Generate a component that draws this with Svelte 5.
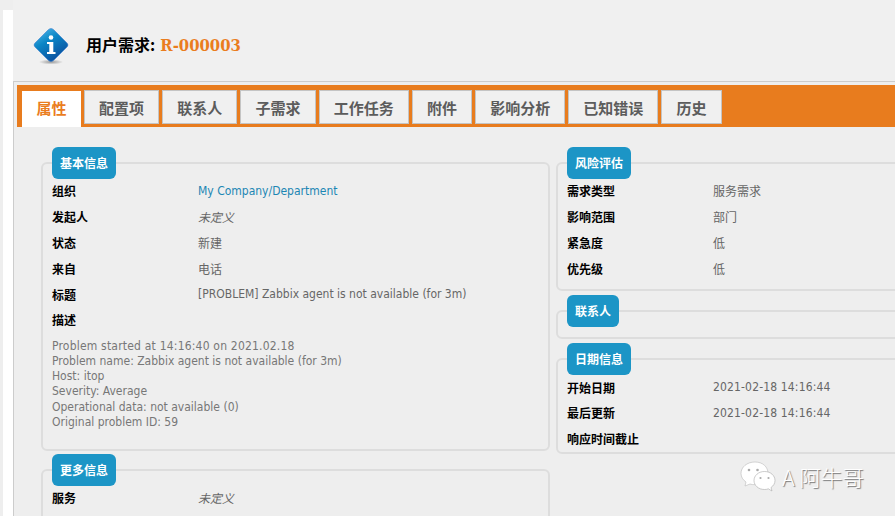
<script>
  const tabs = ['配置项', '联系人', '子需求', '工作任务', '附件', '影响分析', '已知错误', '历史'];

  const basic = [
    { label: '组织', value: 'My Company/Department', kind: 'link' },
    { label: '发起人', value: '未定义', kind: 'undefined' },
    { label: '状态', value: '新建' },
    { label: '来自', value: '电话' },
    { label: '标题', value: '[PROBLEM] Zabbix agent is not available (for 3m)' },
    { label: '描述', value: '' }
  ];

  const description = [
    'Problem started at 14:16:40 on 2021.02.18',
    'Problem name: Zabbix agent is not available (for 3m)',
    'Host: itop',
    'Severity: Average',
    'Operational data: not available (0)',
    'Original problem ID: 59'
  ];

  const risk = [
    { label: '需求类型', value: '服务需求' },
    { label: '影响范围', value: '部门' },
    { label: '紧急度', value: '低' },
    { label: '优先级', value: '低' }
  ];

  const dates = [
    { label: '开始日期', value: '2021-02-18 14:16:44', kind: 'date' },
    { label: '最后更新', value: '2021-02-18 14:16:44', kind: 'date' },
    { label: '响应时间截止', value: '' }
  ];
</script>

{#snippet rows(items)}
  {#each items as row}
    <div class="row">
      <span class="label">{row.label}</span>
      <span class="value {row.kind ?? ''}">{row.value}</span>
    </div>
  {/each}
{/snippet}

<div class="page">
  <div class="strip"></div>
  <div class="main">
    <header class="title">
      <svg class="logo" width="36" height="38" viewBox="0 0 36 38">
        <defs>
          <linearGradient id="dia" x1="0" y1="0" x2="0.6" y2="1">
            <stop offset="0" stop-color="#5cc0ee" />
            <stop offset="0.45" stop-color="#0b86c6" />
            <stop offset="1" stop-color="#0a4f9e" />
          </linearGradient>
          <radialGradient id="shade">
            <stop offset="0" stop-color="#999" />
            <stop offset="1" stop-color="#eee" />
          </radialGradient>
        </defs>
        <ellipse cx="18" cy="35" rx="12" ry="2.5" fill="url(#shade)" />
        <path d="M18 1.5 Q19.5 1.500 21 3 L34 16 Q36 18 34 20 L21 33 Q18 36 15 33 L2 20 Q0 18 2 16 L15 3 Q16.500 1.500 18 1.500 Z" fill="url(#dia)" stroke="#3c7fd0" stroke-width="0.6" />
        <circle cx="18" cy="10.500" r="2.300" fill="#fff" />
        <path d="M14 15 H20.300 V25 H22.500 V27 H14 V25 H16.300 V17 H14 Z" fill="#fff" />
      </svg>
      <h1>用户需求: <span>R-000003</span></h1>
    </header>

    <section class="panel">
      <nav class="tabs">
        <div class="tab active">属性</div>
        {#each tabs as tab}
          <div class="tab">{tab}</div>
        {/each}
      </nav>

      <div class="columns">
        <div class="col left">
          <fieldset>
            <legend>基本信息</legend>
            {@render rows(basic)}
            <div class="description">
              {#each description as line}
                <div>{line}</div>
              {/each}
            </div>
          </fieldset>
          <fieldset class="more">
            <legend>更多信息</legend>
            {@render rows([{ label: '服务', value: '未定义', kind: 'undefined' }])}
          </fieldset>
        </div>
        <div class="col right">
          <fieldset class="risk">
            <legend>风险评估</legend>
            {@render rows(risk)}
          </fieldset>
          <fieldset class="empty">
            <legend>联系人</legend>
          </fieldset>
          <fieldset>
            <legend>日期信息</legend>
            {@render rows(dates)}
          </fieldset>
        </div>
      </div>
    </section>
  </div>

  <div class="watermark">
    <svg width="36" height="32" viewBox="0 0 36 32">
      <path d="M15 1 C7 1 1 6 1 12.500 C1 16 3 19 6 21 L5 25 L10 23 C11.500 23.500 13 23.700 15 23.700 C23 23.700 28 18.500 28 12.500 C28 6 23 1 15 1 Z" fill="#fff" stroke="#bbb" stroke-width="0.6" />
      <path d="M24.500 10.500 C18.500 10.500 14 14.500 14 19.500 C14 24.500 18.500 28.500 24.500 28.500 C26 28.500 27 28.300 28.300 27.800 L32 30 L31 26.500 C33.500 24.800 35 22.300 35 19.500 C35 14.500 30.500 10.500 24.500 10.500 Z" fill="#fff" stroke="#aaa" stroke-width="0.6" />
      <circle cx="9" cy="9" r="1.300" fill="#aaa" />
      <circle cx="17.500" cy="9" r="1.300" fill="#aaa" />
      <circle cx="20.500" cy="17" r="1.100" fill="#aaa" />
      <circle cx="28.500" cy="17" r="1.100" fill="#aaa" />
    </svg>
    <span>A 阿牛哥</span>
  </div>
</div>

<style>
  :global(body) {
    margin: 0;
    background: #eeeeee;
  }

  .page {
    position: relative;
    display: flex;
    align-items: flex-start;
    width: 895px;
    height: 516px;
    overflow: hidden;
    font-family: "DejaVu Sans Condensed", "DejaVu Sans", "Noto Sans CJK SC", sans-serif;
    font-stretch: condensed;
    font-size: 12px;
    color: #666;
    background: #eeeeee;
  }

  .strip {
    flex: none;
    width: 10px;
    height: 506px;
    margin: 10px 0 0 3px;
    background: #fff;
  }

  .main {
    flex: none;
    width: 882px;
  }

  .title {
    display: flex;
    align-items: center;
    height: 81px;
    padding-left: 20px;
    background: #f0f0f0;
  }

  .logo {
    margin-top: 11px;
  }

  h1 {
    margin: 7px 0 0 17px;
    font-size: 16px;
    font-weight: bold;
    color: #000;
    font-family: "Noto Sans CJK SC", sans-serif;
    font-stretch: normal;
  }

  h1 span {
    margin-left: 1.500px;
    font-family: "DejaVu Serif Condensed", "DejaVu Serif", serif;
    font-stretch: condensed;
    font-size: 16.500px;
    color: #ea7d1e;
  }

  .panel {
    border-top: 1px solid #cccccc;
    border-left: 1px solid #cccccc;
    padding: 3px 0 0 3px;
  }

  .tabs {
    display: flex;
    gap: 3px;
    height: 42px;
    box-sizing: border-box;
    padding: 5px 0 3px 5px;
    background: #e87c1e;
  }

  .tab {
    display: flex;
    align-items: center;
    justify-content: center;
    box-sizing: border-box;
    height: 34px;
    padding: 0 14.100px;
    border: 1px solid #c4c4c4;
    background: #f0f0f0;
    font-family: "Noto Sans CJK SC", sans-serif;
    font-stretch: normal;
    font-size: 15px;
    font-weight: 700;
    color: #5c5c5c;
  }

  .tab.active {
    height: 36px;
    margin-top: 1px;
    padding: 0 14.500px 4px;
    border: none;
    background: #fff;
    color: #ea7d1e;
  }

  .columns {
    display: flex;
    padding-left: 24px;
    gap: 6px;
  }

  .col {
    flex: none;
  }

  .col.left {
    width: 509px;
    padding-top: 20px;
  }

  .col.right {
    width: 400px;
    padding-top: 20px;
  }

  fieldset {
    position: relative;
    margin: 0 0 4px;
    padding: 0 9px 0;
    min-width: 0;
    border: 2px solid #dddddd;
    border-radius: 6px;
  }

  .col.left fieldset {
    margin-bottom: 3px;
  }

  legend {
    box-sizing: border-box;
    height: 32px;
    padding: 0 8px;
    line-height: 32px;
    margin-bottom: -1px;
    border-radius: 6px;
    background: #1c95c6;
    color: #fff;
    font-family: "Noto Sans CJK SC", sans-serif;
    font-stretch: normal;
    font-size: 12px;
    font-weight: 700;
  }

  .row {
    display: flex;
    align-items: center;
    height: 25.800px;
  }

  .label {
    flex: none;
    width: 146px;
    color: #000;
    font-family: "Noto Sans CJK SC", sans-serif;
    font-stretch: normal;
    font-weight: 700;
  }

  .value {
    color: #666;
  }

  .value.link {
    color: #1c86b4;
  }

  .value.undefined {
    font-style: italic;
  }

  .value.date {
    letter-spacing: 0.15px;
  }

  .description {
    padding: 6px 0 19px;
    line-height: 15.200px;
    color: #777;
  }

  .description div:first-child {
    letter-spacing: 0.2px;
  }

  .risk {
    padding-bottom: 8px;
  }

  .empty {
    padding-bottom: 10px;
  }

  .empty legend {
    margin-bottom: 0;
  }

  .more {
    padding-bottom: 40px;
  }

  .watermark {
    position: absolute;
    left: 740px;
    top: 459px;
    display: flex;
    align-items: center;
    gap: 6px;
    color: #fff;
    font-family: "Noto Sans CJK SC", sans-serif;
    font-stretch: normal;
    font-size: 21.500px;
    font-weight: 300;
    text-shadow: 1px 1px 1px #777;
  }

  .watermark svg {
    margin-top: 2px;
  }
</style>
